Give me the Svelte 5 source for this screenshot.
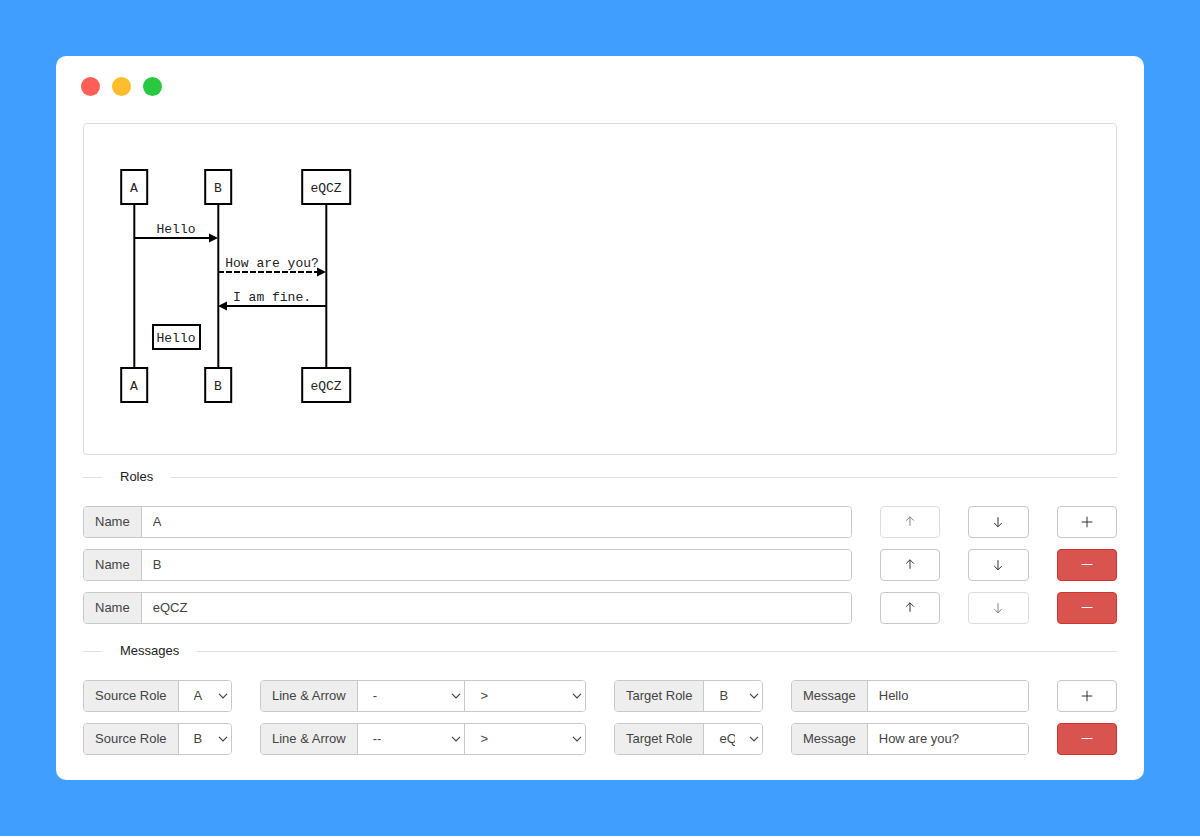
<script>
  let roles = $state(['A', 'B', 'eQCZ']);
  let messages = $state([
    { source: 'A', line: '-', arrow: '>', target: 'B', text: 'Hello' },
    { source: 'B', line: '--', arrow: '>', target: 'eQCZ', text: 'How are you?' },
  ]);

  const lanes = [
    { name: 'A', x: 14, width: 26 },
    { name: 'B', x: 98, width: 26 },
    { name: 'eQCZ', x: 206, width: 48 },
  ];
  const signals = [
    { text: 'Hello', from: 14, to: 98, y: 69, dashed: false },
    { text: 'How are you?', from: 98, to: 206, y: 103, dashed: true },
    { text: 'I am fine.', from: 206, to: 98, y: 137, dashed: false },
  ];

  function move(i, step) {
    const next = [...roles];
    [next[i], next[i + step]] = [next[i + step], next[i]];
    roles = next;
  }
  function addRole() {
    roles.push('');
  }
  function removeRole(i) {
    roles.splice(i, 1);
  }
  function addMessage() {
    messages.push({ source: roles[0], line: '-', arrow: '>', target: roles[0], text: '' });
  }
  function removeMessage(i) {
    messages.splice(i, 1);
  }
</script>

{#snippet icon(d)}
  <svg class="icon" viewBox="0 0 12 12" aria-hidden="true"><path {d} /></svg>
{/snippet}

{#snippet chevron()}
  <svg class="chevron" viewBox="0 0 10 6" aria-hidden="true"><path d="M1 .8l4 4 4-4" /></svg>
{/snippet}

{#snippet addRemove(i, add, remove)}
  {#if i === 0}
    <button type="button" aria-label="Add" onclick={add}>{@render icon('M6 .7v10.6M.7 6h10.6')}</button>
  {:else}
    <button type="button" class="danger" aria-label="Remove" onclick={() => remove(i)}>
      {@render icon('M.5 5.5h11')}
    </button>
  {/if}
{/snippet}

<main>
  <div class="window">
    <div class="dots"><i class="red"></i><i class="amber"></i><i class="green"></i></div>

    <div class="diagram">
      <svg width="234" height="234" viewBox="0 0 234 234" role="img" aria-label="Sequence diagram">
        {#each lanes as lane}
          <path d="M{lane.x + 0.3} 36V198" class="stroke" />
          {#each [1, 199] as y}
            <rect x={lane.x - lane.width / 2 + 0.2} {y} width={lane.width} height="34" class="stroke" />
            <text x={lane.x} y={y + 22}>{lane.name}</text>
          {/each}
        {/each}
        {#each signals as s}
          {@const dir = s.to > s.from ? 1 : -1}
          <path d="M{s.from} {s.y}H{s.to - dir * 5}" class="stroke" class:dashed={s.dashed} />
          <path d="M{s.to} {s.y}l{-9 * dir} -4.6v9.2z" />
          <text x={(s.from + s.to) / 2} y={s.y - 5}>{s.text}</text>
        {/each}
        <rect x="33" y="156" width="47" height="24" class="stroke" />
        <text x="56" y="173">Hello</text>
      </svg>
    </div>

    <h2>Roles</h2>
    <div class="rows">
      {#each roles as _, i}
        <div class="row">
          <label class="group span9">
            <span>Name</span>
            <input type="text" bind:value={roles[i]} />
          </label>
          <button type="button" aria-label="Move up" disabled={i === 0} onclick={() => move(i, -1)}>
            {@render icon('M6 9.8V.8M2.2 4.6L6 .8 9.8 4.6')}
          </button>
          <button type="button" aria-label="Move down" disabled={i === roles.length - 1} onclick={() => move(i, 1)}>
            {@render icon('M6 1.2v9.6M2.2 7L6 10.8 9.8 7')}
          </button>
          {@render addRemove(i, addRole, removeRole)}
        </div>
      {/each}
    </div>

    <h2>Messages</h2>
    <div class="rows">
      {#each messages as m, i}
        <div class="row">
          <label class="group span2">
            <span>Source Role</span>
            <div class="select">
              <select bind:value={m.source}>
                {#each roles as r}<option>{r}</option>{/each}
              </select>
              {@render chevron()}
            </div>
          </label>
          <div class="group span4">
            <span id="line-{i}">Line &amp; Arrow</span>
            <div class="select line">
              <select bind:value={m.line} aria-labelledby="line-{i}">
                <option>-</option><option>--</option>
              </select>
              {@render chevron()}
            </div>
            <div class="select arrow">
              <select bind:value={m.arrow} aria-labelledby="line-{i}">
                <option>&gt;</option><option>&gt;&gt;</option>
              </select>
              {@render chevron()}
            </div>
          </div>
          <label class="group span2">
            <span>Target Role</span>
            <div class="select">
              <select bind:value={m.target}>
                {#each roles as r}<option>{r}</option>{/each}
              </select>
              {@render chevron()}
            </div>
          </label>
          <label class="group span3">
            <span>Message</span>
            <input type="text" bind:value={m.text} />
          </label>
          {@render addRemove(i, addMessage, removeMessage)}
        </div>
      {/each}
    </div>
  </div>
</main>

<style>
  :global(body) {
    margin: 0;
    background: #fff;
  }
  main {
    padding: 56px;
    background: #409eff;
    font: 13px/20px 'Liberation Sans', Arial, sans-serif;
    color: #444;
  }
  .window {
    padding: 21px 27px 25px;
    border-radius: 10px;
    background: #fff;
  }
  .dots {
    display: flex;
    gap: 12px;
    margin: 0 -2px 27px;
  }
  .dots i {
    width: 19px;
    height: 19px;
    border-radius: 50%;
  }
  .red {
    background: #ff5f57;
  }
  .amber {
    background: #ffbd2e;
  }
  .green {
    background: #28c840;
  }
  .diagram {
    padding: 45px 36px 51px;
    border: 1px solid #ddd;
    border-radius: 4px;
  }
  .diagram svg {
    display: block;
  }
  .stroke {
    fill: none;
    stroke: #000;
    stroke-width: 2;
  }
  .dashed {
    stroke-dasharray: 6 2;
  }
  text {
    font: 13px 'Liberation Mono', monospace;
    text-anchor: middle;
    fill: #222;
  }
  h2 {
    display: flex;
    align-items: center;
    gap: 18px;
    margin: 12px 0 19px;
    font: inherit;
    color: #222;
  }
  .rows + h2 {
    margin-top: 17px;
  }
  h2::before,
  h2::after {
    content: '';
    width: 19px;
    height: 1px;
    background: #dcdfe6;
  }
  h2::after {
    flex: 1;
  }
  .rows {
    display: grid;
    gap: 11px;
  }
  .row {
    display: grid;
    grid-template-columns: repeat(12, minmax(0, 1fr));
    gap: 28px;
  }
  .span9 {
    grid-column: span 9;
  }
  .span4 {
    grid-column: span 4;
  }
  .span3 {
    grid-column: span 3;
  }
  .span2 {
    grid-column: span 2;
  }
  .group {
    display: flex;
    box-sizing: border-box;
    height: 32px;
    border: 1px solid #c8c8c8;
    border-radius: 4px;
    overflow: hidden;
    line-height: 30px;
  }
  .group > span {
    flex: none;
    padding: 0 11px;
    border-right: 1px solid #c8c8c8;
    background: #eee;
    white-space: nowrap;
  }
  input,
  select {
    box-sizing: border-box;
    width: 100%;
    min-width: 0;
    height: 30px;
    margin: 0;
    padding: 0 11px;
    border: 0;
    outline: 0;
    background: #fff;
    font: inherit;
    color: #444;
  }
  .select {
    position: relative;
    flex: 1;
    min-width: 0;
  }
  .line {
    flex: 107 1 0;
    border-right: 1px solid #c8c8c8;
  }
  .arrow {
    flex: 120 1 0;
  }
  select {
    display: block;
    appearance: none;
    padding: 0 27px 0 15px;
  }
  .chevron {
    position: absolute;
    top: 12px;
    right: 3px;
    width: 10px;
    height: 6px;
    pointer-events: none;
    fill: none;
    stroke: #444;
    stroke-width: 1.2;
  }
  button {
    display: flex;
    align-items: center;
    justify-content: center;
    height: 32px;
    padding: 0;
    border: 1px solid #c8c8c8;
    border-radius: 4px;
    background: #fff;
    color: #333;
  }
  button:disabled {
    opacity: 0.6;
  }
  .danger {
    border-color: #d0342f;
    background: #d9534f;
    color: #fff;
  }
  .icon {
    width: 12px;
    height: 12px;
    fill: none;
    stroke: currentColor;
    stroke-width: 1;
  }
</style>
